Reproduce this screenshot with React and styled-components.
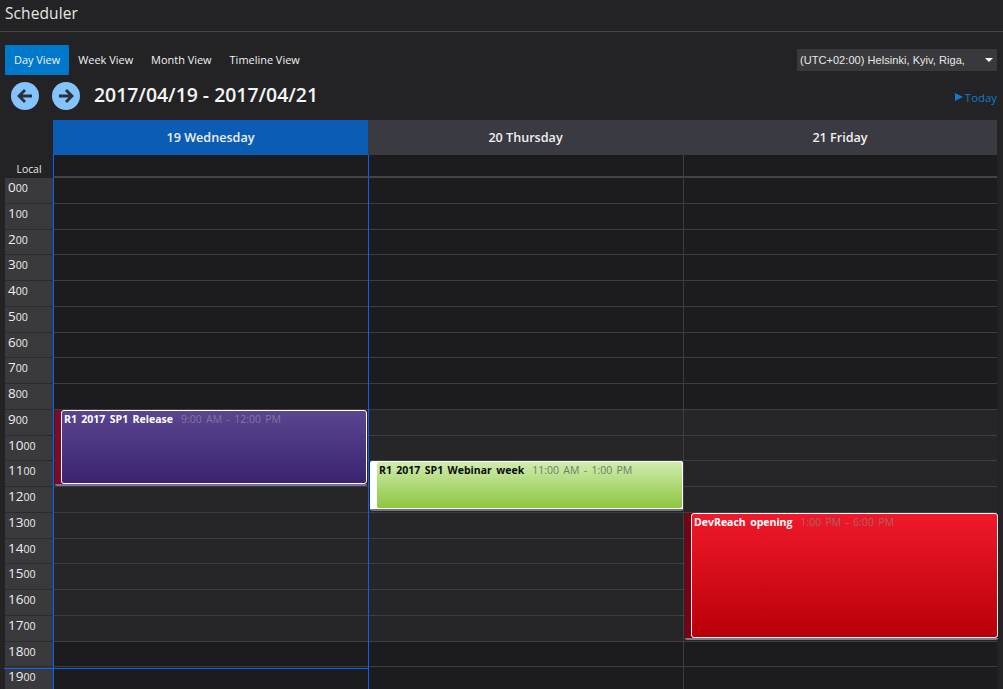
import React from 'react';
import styled, { createGlobalStyle } from 'styled-components';

const BLUE = '#0a62f0';
const Global = createGlobalStyle`
  html, body { margin: 0; padding: 0; background: #232325; overflow: hidden; }
  body { font-family: "Open Sans", "Noto Sans", "Liberation Sans", sans-serif; color: #f0f0f0; }
`;
const Page = styled.div`
  width: 1003px; height: 689px; overflow: hidden; display: flex; flex-direction: column; background: #232325;
`;
const TitleBar = styled.header`
  height: 32px; flex: none; box-sizing: border-box; padding-left: 5px; border-bottom: 1px solid #434345;
  font-size: 15.5px; line-height: 27px; color: #e6e6e6; letter-spacing: .1px;
`;
const ViewBar = styled.div`
  height: 30px; flex: none; margin-top: 13px; padding: 0 6px 0 5px; display: flex; align-items: center; justify-content: space-between;
`;
const Tabs = styled.nav` display: flex; align-items: center; `;
const Tab = styled.button`
  height: 30px; box-sizing: border-box; border: 0; padding: 0 9px 2px; font: 400 10.95px "Open Sans", sans-serif; color: #f2f2f2;
  background: ${p => (p.$active ? '#0078cb' : 'transparent')}; border-radius: 1px;
`;
const Zone = styled.div`
  width: 200px; height: 22px; box-sizing: border-box; background: #39393d; display: flex; align-items: center; justify-content: space-between;
  padding: 0 4px 0 3px; font: 400 11px "Liberation Sans", sans-serif; color: #e8e8e8; letter-spacing: .05px;
`;
const Caret = styled.span`
  width: 0; height: 0; border: 4.5px solid transparent; border-top: 4.5px solid #fff; border-bottom: 0;
`;
const NavBar = styled.div`
  height: 45px; flex: none; padding: 0 6px 4px 11px; display: flex; align-items: center; box-sizing: border-box;
`;
const Round = styled.button`
  width: 28px; height: 28px; padding: 0; border: 0; border-radius: 50%; background: #84c3fb; margin-right: 13px;
  display: flex; align-items: center; justify-content: center; flex: none;
`;
const Range = styled.h2`
  margin: 0 0 2px 1px; font: 600 19.4px "Open Sans", sans-serif; color: #f5f5f5; flex: 1;
`;
const Today = styled.a`
  display: flex; align-items: center; gap: 2px; font-size: 11.4px; color: #0c7bd0; margin-top: 3px;
`;
const TodayMark = styled.span`
  width: 0; height: 0; border: 4.5px solid transparent; border-left: 8px solid #0c7bd0; border-right: 0;
`;
const Board = styled.div`
  flex: 1; min-height: 0; padding: 0 6px 0 5px; display: grid; grid-template-columns: 48px 315px 315px 314px; position: relative; grid-template-rows: 35px 23px 1fr;
`;
const Corner = styled.div`
  grid-column: 1; grid-row: 1 / 3; display: flex; align-items: flex-end; justify-content: center; font-size: 10.4px; color: #e8e8e8; padding: 0 0 2px 0; line-height: 13px;
`;
const DayHead = styled.div`
  background: ${p => (p.$active ? '#0b5cb4' : '#3a3a42')}; display: flex; align-items: center; justify-content: center;
  font-size: 12.6px; font-weight: 600; color: #f0f0f0;
`;
const AllDay = styled.div`
  background: #1c1c1e; border-bottom: 2px solid #444446; box-sizing: border-box;
  border-left: 1px solid ${p => p.$line};
`;
const Gutter = styled.div` display: flex; flex-direction: column; `;
const Hour = styled.div`
  flex: none; height: 25.76px; box-sizing: border-box; background: #3a3a3c; border-bottom: 1px solid #2b2b2d;
  padding-left: 3px; font-size: 13.5px; line-height: 19px; color: #eee;
  small { font-size: 10.6px; }
`;
const Day = styled.div`
  position: relative; display: flex; flex-direction: column;
  border-left: 1px solid ${p => p.$line};
`;
const Slot = styled.div`
  flex: none; height: 25.76px; box-sizing: border-box; background: ${p => (p.$work ? '#262628' : '#1c1c1e')}; border-bottom: 1px solid #3e3e40;
`;
const Appt = styled.div`
  position: absolute; left: 1px; right: ${p => p.$right}px; top: ${p => p.$top}px; height: ${p => p.$h}px;
  border-bottom: 2px solid ${p => p.$edge}; border-radius: 2px; background: ${p => p.$bar}; padding-left: 6px; box-sizing: border-box;
`;
const ApptBody = styled.div`
  height: 100%; box-sizing: border-box; border: 1px solid #fff; border-radius: 3px; background: linear-gradient(${p => p.$from}, ${p => p.$to});
  padding: 0 0 0 2px; font: 700 10.5px/16px "Open Sans", sans-serif; white-space: nowrap; color: ${p => p.$ink}; word-spacing: 1.7px;
`;
const ApptTime = styled.span`
  font-weight: 400; color: ${p => p.$ink}; margin-left: 8px; word-spacing: 1.6px;
`;
const NowLine = styled.div`
  position: absolute; left: 4px; width: 364px; top: 548px; height: 1px; background: ${BLUE}; z-index: 2;
`;

const hours = Array.from({ length: 20 }, (_, i) => i);
const Arrow = ({ flip }) => (
  <svg width="18" height="18" viewBox="0 0 18 18" fill="none" stroke="#2a2f38" strokeWidth="2.8" style={flip ? { transform: 'scaleX(-1)' } : undefined}>
    <path d="M16 9H3M9 3 3 9l6 6" />
  </svg>
);
const Column = ({ events, line }) => (
  <Day $line={line}>
    {hours.map(h => <Slot key={h} $work={h >= 9 && h < 18} />)}
    {events}
  </Day>
);

export default function App() {
  return (
    <Page>
      <Global />
      <TitleBar>Scheduler</TitleBar>
      <ViewBar>
        <Tabs>
          <Tab $active>Day View</Tab>
          <Tab>Week View</Tab>
          <Tab>Month View</Tab>
          <Tab>Timeline View</Tab>
        </Tabs>
        <Zone>(UTC+02:00) Helsinki, Kyiv, Riga,<Caret /></Zone>
      </ViewBar>
      <NavBar>
        <Round aria-label="Previous"><Arrow /></Round>
        <Round aria-label="Next"><Arrow flip /></Round>
        <Range>2017/04/19 - 2017/04/21</Range>
        <Today><TodayMark />Today</Today>
      </NavBar>
      <Board>
        <Corner>Local</Corner>
        <DayHead $active>19 Wednesday</DayHead>
        <DayHead>20 Thursday</DayHead>
        <DayHead>21 Friday</DayHead>
        <AllDay $line={BLUE} />
        <AllDay $line={BLUE} />
        <AllDay $line="#3e3e40" />
        <Gutter>
          {hours.map(h => <Hour key={h}>{h}<small>00</small></Hour>)}
        </Gutter>
        <Column line={BLUE} events={
          <Appt $top={232} $h={76} $right={1} $bar="#7c0a2a" $edge="#77769a">
            <ApptBody $from="#5a4590" $to="#3a2470" $ink="#fff">R1 2017 SP1 Release<ApptTime $ink="#7d7a96">9:00 AM - 12:00 PM</ApptTime></ApptBody>
          </Appt>
        } />
        <Column line={BLUE} events={
          <Appt $top={283} $h={50} $right={0} $bar="#ffffff" $edge="#6e7378">
            <ApptBody $from="#d0ecae" $to="#8cc63f" $ink="#0c0c0c">R1 2017 SP1 Webinar week<ApptTime $ink="#68806a">11:00 AM - 1:00 PM</ApptTime></ApptBody>
          </Appt>
        } />
        <Column line="#3e3e40" events={
          <Appt $top={335} $h={127} $right={-1} $bar="#7e0010" $edge="#7d7f88">
            <ApptBody $from="#f0192a" $to="#b80008" $ink="#fff">DevReach opening<ApptTime $ink="#a8636a">1:00 PM - 6:00 PM</ApptTime></ApptBody>
          </Appt>
        } />
        <NowLine />
      </Board>
    </Page>
  );
}
